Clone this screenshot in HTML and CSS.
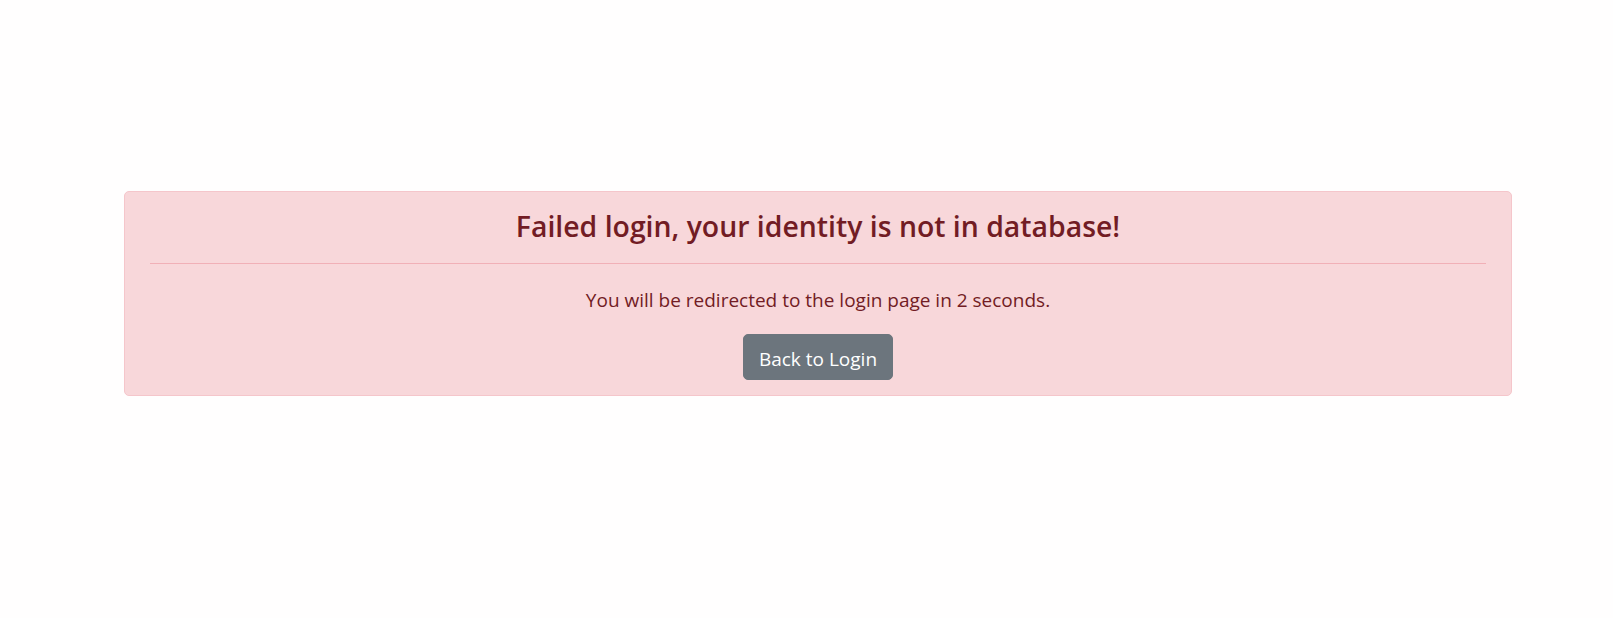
FILE: index.html
```html
<!DOCTYPE html>
<html lang="en">
<head>
<meta charset="utf-8">
<title>Failed login</title>
<link rel="stylesheet" href="styles.css">
</head>
<body>
<main class="page">
  <div class="alert alert-danger">
    <h4 class="alert-heading">Failed login, your identity is not in database!</h4>
    <hr class="divider">
    <p class="message">You will be redirected to the login page in 2 seconds.</p>
    <a class="btn btn-secondary" href="#">Back to Login</a>
  </div>
</main>
</body>
</html>
```

FILE: styles.css
```css
html { font-size: 20px; }
body {
  margin: 0;
  background: #fffefe;
  font-family: "Open Sans", "Noto Sans", sans-serif;
  font-size: 19px;
  line-height: 1.5;
  color: #212529;
}
.page {
  padding: 191px 101px 0 124px;
}
.alert {
  border: 1px solid #f5c6cb;
  border-radius: 5px;
  padding: 15px 25px;
  text-align: center;
}
.alert-danger {
  background: #f8d7da;
  color: #721c24;
}
.alert-heading {
  margin: 0 0 10px;
  padding-top: 2px;
  font-size: 28.4px;
  font-weight: 600;
  line-height: 34px;
}
.divider {
  margin: 20px 0;
  border: 0;
  border-top: 1px solid #f1b0b7;
  height: 0;
}
.message {
  margin: 0 0 20px;
  padding-top: 2px;
  line-height: 28px;
}
.btn {
  display: inline-block;
  padding: 9px 15px 5px;
  border: 1px solid #6c757d;
  border-radius: 5px;
  font-size: 19px;
  line-height: 30px;
  text-decoration: none;
}
.btn-secondary {
  background: #6c757d;
  color: #fff;
}
```
